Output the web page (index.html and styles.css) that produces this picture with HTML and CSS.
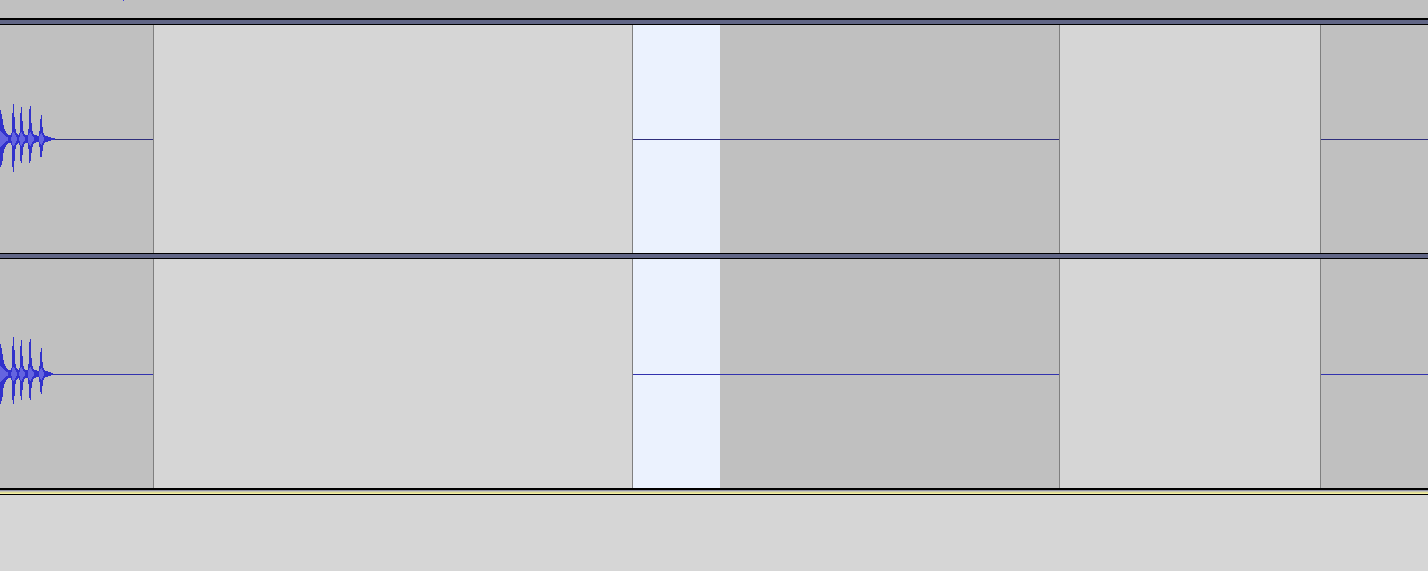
FILE: index.html
```html
<!DOCTYPE html>
<html>
<head>
<meta charset="utf-8">
<link rel="stylesheet" href="styles.css">
</head>
<body>
<div class="page">
  <div class="top"><div class="dot"></div></div>
  <div class="sep sep-top"></div>
  <div class="track t1">
    <div class="col c1">
      <svg width="153" height="228" viewBox="0 0 153 228">
        <rect x="0" y="114" width="153" height="1" class="zero1"/>
        <path class="wave-outer" d="M0.5 85V142M1.5 89V140M2.5 94V136M3.5 100V128M4.5 104V124M5.5 106V122M6.5 108V120M7.5 109V119M8.5 110V118M9.5 110V118M10.5 110V118M11.5 108V120M12.5 88V142M13.5 79V147M14.5 92V136M15.5 104V124M16.5 108V120M17.5 109V119M18.5 110V118M19.5 108V120M20.5 88V136M21.5 82V138M22.5 96V130M23.5 106V122M24.5 109V119M25.5 110V118M26.5 110V118M27.5 110V118M28.5 104V124M29.5 84V138M30.5 81V136M31.5 98V128M32.5 106V122M33.5 109V119M34.5 110V118M35.5 110V118M36.5 110V117M37.5 111V117M38.5 111V117M39.5 106V122M40.5 94V132M41.5 90V132M42.5 102V126M43.5 108V120M44.5 110V118M45.5 111V117M46.5 111V117M47.5 111V117M48.5 112V116M49.5 112V116M50.5 112V116M51.5 113V115M52.5 113V115M53.5 113V115M54.5 113V115"/>
        <path class="wave-inner" d="M0.5 106V122M1.5 107V121M2.5 108V120M3.5 109V119M4.5 110V118M5.5 111V117M6.5 112V116M7.5 112V116M11.5 112V116M12.5 108V120M13.5 107V121M14.5 108V120M15.5 110V118M16.5 112V116M19.5 112V116M20.5 108V120M21.5 107V121M22.5 109V119M23.5 111V117M24.5 112V116M28.5 110V118M29.5 108V120M30.5 107V121M31.5 109V119M32.5 111V117M33.5 112V116M39.5 111V117M40.5 109V119M41.5 108V120M42.5 110V118M43.5 112V116"/>
      </svg>
    </div>
    <div class="vline"></div>
    <div class="col c2"></div>
    <div class="vline"></div>
    <div class="span">
      <div class="col c3"></div>
      <div class="col c4"></div>
      <div class="zero zero-t1"></div>
    </div>
    <div class="vline"></div>
    <div class="col c5"></div>
    <div class="vline"></div>
    <div class="col c6"><div class="zero zero-t1"></div></div>
  </div>
  <div class="sep sep-mid"></div>
  <div class="track t2">
    <div class="col c1">
      <svg width="153" height="229" viewBox="0 0 153 229">
        <rect x="0" y="115" width="153" height="1" class="zero2"/>
        <g transform="translate(0,1)">
        <path class="wave-outer" d="M0.5 84V144M1.5 88V141M2.5 94V137M3.5 100V128M4.5 104V124M5.5 106V122M6.5 108V120M7.5 109V119M8.5 110V118M9.5 110V118M10.5 110V118M11.5 108V120M12.5 86V140M13.5 77V144M14.5 90V136M15.5 104V124M16.5 108V120M17.5 109V119M18.5 110V118M19.5 108V120M20.5 86V136M21.5 80V140M22.5 96V130M23.5 106V122M24.5 109V119M25.5 110V118M26.5 110V118M27.5 110V118M28.5 104V124M29.5 82V138M30.5 79V140M31.5 98V128M32.5 106V122M33.5 109V119M34.5 110V118M35.5 110V118M36.5 110V117M37.5 111V117M38.5 111V117M39.5 106V122M40.5 92V132M41.5 88V134M42.5 102V126M43.5 108V120M44.5 110V118M45.5 111V117M46.5 111V117M47.5 111V117M48.5 112V116M49.5 112V116M50.5 112V116M51.5 113V115M52.5 113V115"/>
        <path class="wave-inner" d="M0.5 106V122M1.5 107V121M2.5 108V120M3.5 109V119M4.5 110V118M5.5 111V117M6.5 112V116M7.5 112V116M11.5 112V116M12.5 108V120M13.5 107V121M14.5 108V120M15.5 110V118M16.5 112V116M19.5 112V116M20.5 108V120M21.5 107V121M22.5 109V119M23.5 111V117M24.5 112V116M28.5 110V118M29.5 108V120M30.5 107V121M31.5 109V119M32.5 111V117M33.5 112V116M39.5 111V117M40.5 109V119M41.5 108V120M42.5 110V118M43.5 112V116"/>
        </g>
      </svg>
    </div>
    <div class="vline"></div>
    <div class="col c2"></div>
    <div class="vline"></div>
    <div class="span">
      <div class="col c3"></div>
      <div class="col c4"></div>
      <div class="zero zero-t2"></div>
    </div>
    <div class="vline"></div>
    <div class="col c5"></div>
    <div class="vline"></div>
    <div class="col c6"><div class="zero zero-t2"></div></div>
  </div>
  <div class="sep-bot">
    <div class="sb-black2"></div>
    <div class="sb-s1"></div>
    <div class="sb-s2"></div>
    <div class="sb-s3"></div>
    <div class="sb-s4"></div>
    <div class="sb-black1"></div>
  </div>
  <div class="rest"></div>
</div>
</body>
</html>
```

FILE: styles.css
```css
html, body {
  margin: 0;
  padding: 0;
  background: #d6d6d6;
  font-family: "Liberation Sans", Arial, sans-serif;
}

.page {
  width: 1428px;
  height: 571px;
  overflow: hidden;
  display: flex;
  flex-direction: column;
}

.top {
  height: 18px;
  flex: none;
  background: #c0c0c0;
  padding-left: 123px;
  box-sizing: border-box;
}

.dot {
  width: 1px;
  height: 1px;
  background: #3a3ae0;
}

.sep {
  flex: none;
  background: #616686;
  height: 4px;
  border-bottom: 1px solid #000;
}

.sep-top {
  border-top: 2px solid #000;
}

.sep-mid {
  border-top: 1px solid #000;
}

.track {
  flex: none;
  display: flex;
  position: relative;
}

.t1 { height: 228px; }
.t2 { height: 229px; }

.col {
  flex: none;
  height: 100%;
}

.c1 { width: 153px; background: #c0c0c0; }
.c1 svg { display: block; }
.c2 { width: 478px; background: #d6d6d6; }
.c3 { width: 87px; background: #ebf2fe; }
.c4 { width: 339px; background: #c0c0c0; }
.c5 { width: 260px; background: #d6d6d6; }
.c6 { width: 107px; background: #c0c0c0; position: relative; }

.vline {
  flex: none;
  width: 1px;
  height: 100%;
  background: #7f7f7f;
}

.span {
  flex: none;
  display: flex;
  height: 100%;
  position: relative;
}

.zero {
  position: absolute;
  left: 0;
  right: 0;
  height: 1px;
}

.zero-t1 { top: 114px; background: #2e2e7c; }
.zero-t2 { top: 115px; background: #3232ae; }

.zero1 { fill: #2e2e7c; }
.zero2 { fill: #3232ae; }

.wave-outer {
  stroke: #3232cc;
  stroke-width: 1;
  fill: none;
}

.wave-inner {
  stroke: #6464e0;
  stroke-width: 1;
  fill: none;
}

.sep-bot {
  flex: none;
  display: flex;
  flex-direction: column;
}

.sb-black2 { height: 2px; background: #000; }
.sb-s1 { height: 1px; background: #9090a4; }
.sb-s2 { height: 1px; background: #c8c8b8; }
.sb-s3 { height: 1px; background: #e0dc98; }
.sb-s4 { height: 1px; background: #f4f0a0; }
.sb-black1 { height: 1px; background: #000; }

.rest {
  flex: 1;
  background: #d6d6d6;
}
```
